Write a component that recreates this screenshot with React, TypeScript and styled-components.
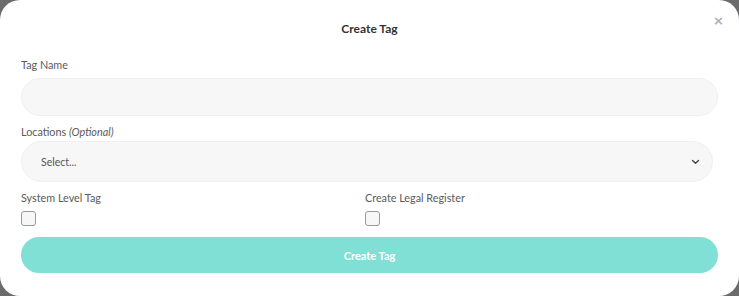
import React, { useState } from 'react'
import styled, { createGlobalStyle } from 'styled-components'

const GlobalStyle = createGlobalStyle`
  html, body {
    margin: 0;
    padding: 0;
    background: #6b6b6b;
  }
  * {
    box-sizing: border-box;
  }
`

const Backdrop = styled.div`
  width: 739px;
  height: 296px;
  background: #6b6b6b;
`

const Modal = styled.div`
  position: relative;
  width: 739px;
  height: 296px;
  background: #fff;
  border-radius: 20px;
  padding: 20px 21px 0 21px;
  font-family: Lato, "Liberation Sans", sans-serif;
  color: #555;
`

const Title = styled.h2`
  margin: 0;
  text-align: center;
  font-size: 12px;
  font-weight: 700;
  color: #333;
  line-height: 18px;
`

const CloseButton = styled.button`
  position: absolute;
  top: 14px;
  right: 15px;
  border: none;
  background: transparent;
  color: #aeacbd;
  font-size: 13px;
  font-weight: 700;
  line-height: 13px;
  padding: 0;
  cursor: pointer;
  font-family: "DejaVu Sans", sans-serif;
`

const Form = styled.div`
  display: flex;
  flex-direction: column;
  margin-top: 20px;
`

const Label = styled.label<{ $gap?: number }>`
  display: block;
  font-size: 10.8px;
  line-height: 14px;
  color: #5a5a5a;
  margin-bottom: ${p => p.$gap ?? 6}px;

  em {
    font-style: italic;
  }
`

const TextInput = styled.input`
  width: 697px;
  height: 38px;
  border-radius: 19px;
  border: 1px solid #f0f0f0;
  background: #f7f7f7;
  outline: none;
  padding: 0 18px;
  font-family: inherit;
  font-size: 10px;
  margin-bottom: 9px;
`

const SelectBox = styled.div`
  width: 692px;
  height: 41px;
  border-radius: 21px;
  border: 1px solid #f0f0f0;
  background: #f7f7f7;
  display: flex;
  align-items: center;
  justify-content: space-between;
  padding: 0 12px 0 19px;
  font-size: 10.5px;
  color: #555;
  margin-bottom: 9px;
`

const Row = styled.div`
  display: grid;
  grid-template-columns: 344px 1fr;
  margin-bottom: 11px;
`

const Field = styled.div`
  display: flex;
  flex-direction: column;
`

const Checkbox = styled.span<{ $checked: boolean }>`
  width: 15px;
  height: 15px;
  border: 1px solid #9a9a9a;
  border-radius: 3px;
  background: ${p => (p.$checked ? '#80e0d6' : '#f7f7f7')};
  cursor: pointer;
`

const SubmitButton = styled.button`
  width: 697px;
  height: 36px;
  border: none;
  border-radius: 18px;
  background: #81e0d6;
  color: #fff;
  font-family: inherit;
  font-size: 11px;
  font-weight: 700;
  cursor: pointer;
`

const Chevron = () => (
  <svg width="9" height="6" viewBox="0 0 9 6" fill="none">
    <path d="M1.5 1.5 L4.5 4.3 L7.5 1.5" stroke="#444" strokeWidth="1.4" strokeLinecap="round" strokeLinejoin="round" />
  </svg>
)

const App = () => {
  const [systemTag, setSystemTag] = useState(false)
  const [legalRegister, setLegalRegister] = useState(false)
  return (
    <>
      <GlobalStyle />
      <Backdrop>
        <Modal>
          <Title>Create Tag</Title>
          <CloseButton>×</CloseButton>
          <Form>
            <Label>Tag Name</Label>
            <TextInput />
            <Label $gap={2}>Locations <em>(Optional)</em></Label>
            <SelectBox>
              <span>Select...</span>
              <Chevron />
            </SelectBox>
            <Row>
              <Field>
                <Label>System Level Tag</Label>
                <Checkbox $checked={systemTag} onClick={() => setSystemTag(!systemTag)} />
              </Field>
              <Field>
                <Label>Create Legal Register</Label>
                <Checkbox $checked={legalRegister} onClick={() => setLegalRegister(!legalRegister)} />
              </Field>
            </Row>
            <SubmitButton>Create Tag</SubmitButton>
          </Form>
        </Modal>
      </Backdrop>
    </>
  )
}

export default App
